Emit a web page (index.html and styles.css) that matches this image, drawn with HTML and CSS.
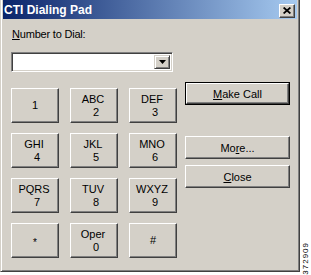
FILE: index.html
```html
<!DOCTYPE html>
<html lang="en">
<head>
    <meta charset="UTF-8">
    <title>CTI Dialing Pad</title>
    <link rel="stylesheet" href="styles.css">
</head>
<body>
<div class="page">
    <div class="window">
        <!-- Title bar -->
        <div class="titlebar">
            <span class="title">CTI Dialing Pad</span>
            <button class="caption-btn" title="Close">
                <svg width="8" height="7" viewBox="0 0 8 7"><path d="M0.6 0.5 L7.4 6.5 M7.4 0.5 L0.6 6.5" stroke="#000" stroke-width="1.7" fill="none"/></svg>
            </button>
        </div>

        <div class="client">
            <div class="dial-col">
                <div class="dial-label"><u>N</u>umber to Dial:</div>
                <div class="combo">
                    <span class="combo-field"></span>
                    <span class="combo-btn">
                        <svg width="7" height="4" viewBox="0 0 7 4"><polygon points="0,0 7,0 3.5,4" fill="#000"/></svg>
                    </span>
                </div>

                <div class="keypad">
                    <button class="key"><span>1</span></button>
                    <button class="key"><span class="letters">ABC</span><span class="digit">2</span></button>
                    <button class="key"><span class="letters">DEF</span><span class="digit">3</span></button>
                    <button class="key"><span class="letters">GHI</span><span class="digit">4</span></button>
                    <button class="key"><span class="letters">JKL</span><span class="digit">5</span></button>
                    <button class="key"><span class="letters">MNO</span><span class="digit">6</span></button>
                    <button class="key"><span class="letters">PQRS</span><span class="digit">7</span></button>
                    <button class="key"><span class="letters">TUV</span><span class="digit">8</span></button>
                    <button class="key"><span class="letters">WXYZ</span><span class="digit">9</span></button>
                    <button class="key star"><span>*</span></button>
                    <button class="key"><span class="letters">Oper</span><span class="digit">0</span></button>
                    <button class="key"><span>#</span></button>
                </div>
            </div>

            <div class="action-col">
                <button class="btn btn-default"><span class="btn-face"><u>M</u>ake Call</span></button>
                <button class="btn btn-more">Mo<u>r</u>e...</button>
                <button class="btn"><u>C</u>lose</button>
            </div>
        </div>
    </div>

    <div class="figure-no"><span>372909</span></div>
</div>
</body>
</html>
```

FILE: styles.css
```css
/* --- Page --- */
body {
    margin: 0;
    background: #fff;
    font-family: "Liberation Sans", Arial, sans-serif;
    font-size: 11px;
    color: #000;
}
.page {
    display: flex;
    width: 311px; height: 275px;
}

/* --- Window frame --- */
.window {
    width: 300px; height: 272px;
    box-sizing: border-box;
    background: #d4d0c8;
    border-left: 1px solid #d4d0c8;
    border-right: 1px solid #404040;
    border-bottom: 1px solid #404040;
    box-shadow: inset 1px 0 #fff, inset -1px -1px #808080;
    padding: 0 2px 2px 2px;
    display: flex; flex-direction: column;
}

/* --- Title bar --- */
.titlebar {
    height: 19px;
    display: flex; align-items: center; justify-content: space-between;
    padding: 0 2px 0 1px;
    background: linear-gradient(90deg, #0a246a, #a6caf0);
}
.title {
    color: #fff;
    font-weight: bold;
    font-size: 12px;
}
.caption-btn {
    width: 16px; height: 14px;
    margin-top: 2px;
    padding: 0;
    display: flex; align-items: center; justify-content: center;
    background: #d4d0c8;
    border: 1px solid; border-color: #fff #404040 #404040 #fff;
    box-shadow: inset -1px -1px #808080;
}

/* --- Client area --- */
.client {
    flex: 1;
    display: flex;
}
.dial-col {
    padding: 9px 0 0 8px;
    width: 166px;
}
.dial-label {
    line-height: 13px;
    margin-bottom: 11px;
    padding-left: 1px;
    letter-spacing: -0.2px;
}

/* --- Combo box --- */
.combo {
    width: 162px; height: 20px;
    box-sizing: border-box;
    display: flex; justify-content: flex-end; align-items: stretch;
    background: #fff;
    border: 1px solid; border-color: #808080 #fff #fff #808080;
    box-shadow: inset 1px 1px #404040, inset -1px -1px #d4d0c8;
    padding: 2px;
}
.combo-btn {
    width: 16px;
    box-sizing: border-box;
    display: flex; align-items: center; justify-content: center;
    background: #d4d0c8;
    border: 1px solid; border-color: #d4d0c8 #404040 #404040 #d4d0c8;
    box-shadow: inset 1px 1px #fff, inset -1px -1px #808080;
}

/* --- Keypad --- */
.keypad {
    margin-top: 16px;
    display: grid;
    grid-template-columns: repeat(3, 48px);
    grid-auto-rows: 35px;
    gap: 10px 11px;
}
.key, .btn {
    font-family: inherit; font-size: 11px; color: #000;
    background: #d4d0c8;
    padding: 0;
    border: 1px solid; border-color: #fff #404040 #404040 #fff;
    box-shadow: inset -1px -1px #808080;
}
.key {
    display: flex; flex-direction: column; align-items: center; justify-content: center;
    line-height: 13px;
}
.key .letters { padding-right: 2px; }
.key .digit { padding-left: 4px; }
.key.star span { padding-top: 3px; font-size: 10px; }

/* --- Action buttons --- */
.action-col {
    padding: 63px 0 0 8px;
    display: flex; flex-direction: column;
}
.btn {
    width: 105px; height: 23px;
    box-sizing: border-box;
}
.btn-default {
    border: 1px solid #000;
    box-shadow: none;
    display: flex;
}
.btn-default .btn-face {
    flex: 1;
    display: flex; align-items: center; justify-content: center;
    border: 1px solid; border-color: #fff #404040 #404040 #fff;
    box-shadow: inset -1px -1px #808080;
}
.btn-more {
    margin: 31px 0 6px;
}

/* --- Figure number in margin --- */
.figure-no {
    flex: 1;
    display: flex; flex-direction: column; justify-content: flex-end; align-items: center;
}
.figure-no span {
    writing-mode: vertical-rl;
    transform: rotate(180deg);
    font-size: 8px;
    letter-spacing: 1px;
    line-height: 8px;
}
```
